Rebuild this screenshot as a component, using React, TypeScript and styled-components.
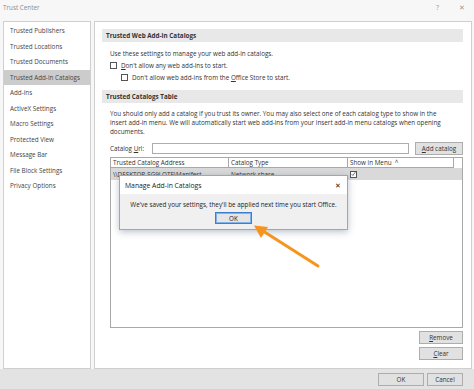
import React from 'react';
import styled, { createGlobalStyle } from 'styled-components';

const GlobalStyle = createGlobalStyle`
  html, body {
    margin: 0;
    padding: 0;
  }
  body {
    background: #f7f7f7;
    font-family: "Open Sans", "Noto Sans", sans-serif;
  }
`;

const Window = styled.div`
  position: relative;
  width: 474px;
  height: 389px;
  display: flex;
  flex-direction: column;
  background: #f7f7f7;
  font-size: 6.3px;
  line-height: 9px;
  color: #333;
  overflow: hidden;
`;

const TitleBar = styled.div`
  height: 21px;
  box-sizing: border-box;
  display: flex;
  justify-content: space-between;
  padding: 3px 9px 0 3px;
  color: #8c8c8c;
`;

const TitleControls = styled.div`
  display: flex;
  gap: 20px;
  font-size: 7px;
  color: #999;
`;

const Main = styled.div`
  flex: 1;
  display: flex;
  gap: 3px;
  padding: 0 2px 0 3px;
`;

const Nav = styled.div`
  width: 88px;
  box-sizing: border-box;
  border: 1px solid #cfcfcf;
  background: #fff;
  padding-top: 1px;
`;

const NavItem = styled.div<{ active?: boolean }>`
  height: 15.5px;
  display: flex;
  align-items: center;
  padding-left: 6px;
  color: #444;
  background: ${p => (p.active ? '#cccccc' : 'transparent')};
`;

const Content = styled.div`
  flex: 1;
  box-sizing: border-box;
  border: 1px solid #cfcfcf;
  background: #fff;
  padding: 7px 8px 0 7px;
  display: flex;
  flex-direction: column;
`;

const SectionHeader = styled.div<{ gap?: number }>`
  height: 13px;
  display: flex;
  align-items: center;
  padding-left: 4px;
  margin-top: ${p => p.gap || 0}px;
  background: #e8e8e8;
  font-weight: 700;
  color: #333;
`;

const SectionBody = styled.div`
  padding-left: 8px;
  display: flex;
  flex-direction: column;
`;

const Text = styled.div<{ gap?: number }>`
  margin-top: ${p => p.gap || 0}px;
  white-space: nowrap;
`;

const CheckRow = styled.label<{ indent?: number; gap?: number }>`
  display: flex;
  align-items: center;
  gap: 4px;
  margin-top: ${p => p.gap || 0}px;
  padding-left: ${p => p.indent || 0}px;
  white-space: nowrap;
`;

const Box = styled.span`
  width: 7px;
  height: 7px;
  box-sizing: border-box;
  border: 1px solid #555;
  background: #fff;
  display: inline-flex;
  align-items: center;
  justify-content: center;
  flex-shrink: 0;
`;

const Key = styled.span`
  text-decoration: underline;
`;

const UrlRow = styled.div`
  display: flex;
  align-items: center;
  margin-top: 5px;
  height: 14px;
`;

const UrlLabel = styled.span`
  width: 42px;
`;

const UrlInput = styled.div`
  flex: 1;
  height: 11px;
  box-sizing: border-box;
  border: 1px solid #adadad;
  background: #fff;
  margin-right: 6px;
`;

const Button = styled.div<{ w: number }>`
  width: ${p => p.w}px;
  height: 13px;
  box-sizing: border-box;
  border: 1px solid #adadad;
  background: #e1e1e1;
  display: flex;
  align-items: center;
  justify-content: center;
  color: #333;
`;

const Table = styled.div`
  margin-top: 2px;
  height: 171px;
  box-sizing: border-box;
  border: 1px solid #a8a8a8;
  background: #fff;
`;

const HeaderRow = styled.div`
  display: flex;
  height: 10px;
`;

const HeaderCell = styled.div<{ w: number }>`
  width: ${p => p.w}px;
  box-sizing: border-box;
  border-right: 1px solid #a8a8a8;
  border-bottom: 1px solid #a8a8a8;
  padding-left: 2px;
  display: flex;
  align-items: center;
  gap: 3px;
  white-space: nowrap;
`;

const Row = styled.div<{ selected?: boolean }>`
  display: flex;
  height: 12px;
  align-items: center;
  background: ${p => (p.selected ? '#d9d9d9' : 'transparent')};
`;

const Cell = styled.div<{ w: number }>`
  width: ${p => p.w}px;
  padding-left: 2px;
  box-sizing: border-box;
  white-space: nowrap;
  display: flex;
  align-items: center;
`;

const SideButtons = styled.div`
  display: flex;
  flex-direction: column;
  align-items: flex-end;
  gap: 3px;
  margin-top: 3px;
`;

const Footer = styled.div`
  height: 20px;
  background: #e3e3e3;
  display: flex;
  align-items: center;
  justify-content: flex-end;
  gap: 3px;
  padding-right: 11px;
`;

const Dialog = styled.div`
  position: absolute;
  left: 119px;
  top: 175px;
  width: 229px;
  height: 55px;
  box-sizing: border-box;
  border: 1px solid #86acd6;
  background: #f0f0f0;
  box-shadow: 0 2px 7px rgba(60, 80, 110, 0.35);
  display: flex;
  flex-direction: column;
`;

const DialogTitle = styled.div`
  height: 18px;
  background: #fff;
  display: flex;
  align-items: center;
  justify-content: space-between;
  padding: 0 6px 0 5px;
  font-size: 6.8px;
  color: #222;
`;

const DialogBody = styled.div`
  flex: 1;
  display: flex;
  flex-direction: column;
  align-items: center;
  padding-top: 6px;
  gap: 3px;
  color: #222;
`;

const DialogOk = styled.div`
  width: 37px;
  height: 12px;
  box-sizing: border-box;
  border: 1px solid #3c7fd1;
  box-shadow: inset 0 0 0 1px #7fb1ea;
  background: #e5e5e5;
  display: flex;
  align-items: center;
  justify-content: center;
`;

const Overlay = styled.svg`
  position: absolute;
  left: 0;
  top: 0;
  pointer-events: none;
`;

const navItems = [
  'Trusted Publishers',
  'Trusted Locations',
  'Trusted Documents',
  'Trusted Add-in Catalogs',
  'Add-ins',
  'ActiveX Settings',
  'Macro Settings',
  'Protected View',
  'Message Bar',
  'File Block Settings',
  'Privacy Options',
];

const Check = () => (
  <svg width="6" height="6" viewBox="0 0 6 6">
    <path d="M0.8 3.2 L2.3 4.8 L5.2 0.8" fill="none" stroke="#333" strokeWidth="0.8" />
  </svg>
);

const App: React.FC = () => {
  return (
    <Window>
      <GlobalStyle />
      <TitleBar>
        <span>Trust Center</span>
        <TitleControls>
          <span>?</span>
          <span>✕</span>
        </TitleControls>
      </TitleBar>
      <Main>
        <Nav>
          {navItems.map(item => (
            <NavItem key={item} active={item === 'Trusted Add-in Catalogs'}>
              {item}
            </NavItem>
          ))}
        </Nav>
        <Content>
          <SectionHeader>Trusted Web Add-in Catalogs</SectionHeader>
          <SectionBody>
            <Text gap={7}>Use these settings to manage your web add-in catalogs.</Text>
            <CheckRow gap={3}>
              <Box />
              <span>
                <Key>D</Key>on't allow any web add-ins to start.
              </span>
            </CheckRow>
            <CheckRow gap={3} indent={11}>
              <Box />
              <span>
                Don't allow web add-ins from the <Key>O</Key>ffice Store to start.
              </span>
            </CheckRow>
          </SectionBody>
          <SectionHeader gap={8}>Trusted Catalogs Table</SectionHeader>
          <SectionBody>
            <Text gap={6}>
              You should only add a catalog if you trust its owner. You may also select one of each catalog type to show in the
            </Text>
            <Text>
              insert add-in menu. We will automatically start web add-ins from your insert add-in menu catalogs when opening
            </Text>
            <Text>documents.</Text>
            <UrlRow>
              <UrlLabel>
                Catalog <Key>U</Key>rl:
              </UrlLabel>
              <UrlInput />
              <Button w={48}>
                <span>
                  <Key>A</Key>dd catalog
                </span>
              </Button>
            </UrlRow>
            <Table>
              <HeaderRow>
                <HeaderCell w={118}>Trusted Catalog Address</HeaderCell>
                <HeaderCell w={119}>Catalog Type</HeaderCell>
                <HeaderCell w={106}>
                  Show in Menu <span>^</span>
                </HeaderCell>
              </HeaderRow>
              <Row selected>
                <Cell w={118}>\\DESKTOP-SG9LOTF\Manifest</Cell>
                <Cell w={119}>Network share</Cell>
                <Cell w={106}>
                  <Box>
                    <Check />
                  </Box>
                </Cell>
              </Row>
            </Table>
            <SideButtons>
              <Button w={44}>
                <span>
                  <Key>R</Key>emove
                </span>
              </Button>
              <Button w={44}>
                <span>
                  <Key>C</Key>lear
                </span>
              </Button>
            </SideButtons>
          </SectionBody>
        </Content>
      </Main>
      <Footer>
        <Button w={46}>OK</Button>
        <Button w={36}>Cancel</Button>
      </Footer>

      <Dialog>
        <DialogTitle>
          <span>Manage Add-in Catalogs</span>
          <span>✕</span>
        </DialogTitle>
        <DialogBody>
          <span>We've saved your settings, they'll be applied next time you start Office.</span>
          <DialogOk>OK</DialogOk>
        </DialogBody>
      </Dialog>

      <Overlay width="474" height="389" viewBox="0 0 474 389">
        <line x1="318" y1="266" x2="263" y2="231" stroke="#f7941d" strokeWidth="3" strokeLinecap="round" />
        <polygon points="254,225.5 268,227 261,238" fill="#f7941d" />
      </Overlay>
    </Window>
  );
};

export default App;
